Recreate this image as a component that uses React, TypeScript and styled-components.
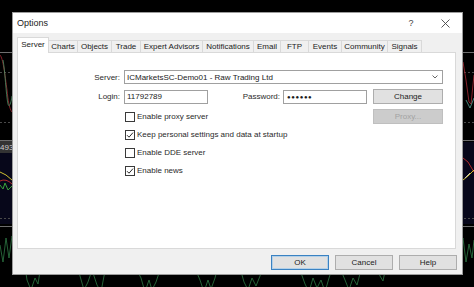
import React from 'react';
import styled, { createGlobalStyle } from 'styled-components';

const GlobalStyle = createGlobalStyle`
  html, body {
    margin: 0;
    padding: 0;
    background: #000;
  }
  body {
    font-family: 'Liberation Sans', Arial, sans-serif;
  }
`;

const Desktop = styled.div`
  position: relative;
  width: 474px;
  height: 287px;
  overflow: hidden;
  box-sizing: border-box;
  padding: 12px 0 0 12px;
  background: #000;
`;

const ChartLayer = styled.svg`
  position: absolute;
  left: 0;
  top: 0;
`;

const Window = styled.div`
  position: relative;
  width: 451px;
  height: 263px;
  box-sizing: border-box;
  border: 1px solid #9c9c9c;
  background: #f0f0f0;
  display: flex;
  flex-direction: column;
  font-size: 8px;
  color: #222;
`;

const TitleBar = styled.div`
  height: 20px;
  background: #fff;
  display: flex;
  align-items: center;
  padding-left: 4px;
`;

const Title = styled.span`
  flex: 1;
  font-size: 9px;
  color: #222;
`;

const TitleButton = styled.div`
  width: 34px;
  height: 20px;
  display: flex;
  align-items: center;
  justify-content: center;
  font-size: 9px;
  color: #444;
`;

const TabStrip = styled.div`
  position: relative;
  z-index: 1;
  height: 20px;
  margin-bottom: -1px;
  padding-left: 4px;
  display: flex;
  align-items: flex-end;
`;

const Tab = styled.div<{ $w: number; $active?: boolean }>`
  box-sizing: border-box;
  width: ${({ $w }) => $w}px;
  height: ${({ $active }) => ($active ? 16 : 12)}px;
  margin-bottom: ${({ $active }) => ($active ? 0 : 1)}px;
  padding-bottom: ${({ $active }) => ($active ? 2 : 0)}px;
  display: flex;
  align-items: center;
  justify-content: center;
  white-space: nowrap;
  background: ${({ $active }) => ($active ? '#fff' : '#f0f0f0')};
  border: 1px solid #d9d9d9;
  border-bottom: none;
  border-left: ${({ $active }) => ($active ? '1px solid #d9d9d9' : 'none')};
  color: #222;
`;

const TabPanel = styled.div`
  box-sizing: border-box;
  height: 197px;
  margin: 0 6px 0 4px;
  padding-top: 17px;
  background: #fff;
  border: 1px solid #d9d9d9;
`;

const Form = styled.div`
  display: grid;
  grid-template-columns: 106px 84px 75px 84px 6px 70px;
  grid-template-rows: 14px 15px auto;
  row-gap: 5px;
  align-items: center;
`;

const Label = styled.label<{ $pad?: number }>`
  text-align: right;
  padding-right: ${({ $pad }) => $pad ?? 4}px;
  color: #2a2a2a;
`;

const TextBox = styled.div<{ $span?: string }>`
  grid-column: ${({ $span }) => $span ?? 'auto'};
  box-sizing: border-box;
  height: 14px;
  padding-left: 2px;
  display: flex;
  align-items: center;
  background: #fff;
  border: 1px solid #a0a0a0;
  color: #1a1a1a;
`;

const ComboText = styled.span`
  flex: 1;
`;

const Chevron = styled.svg`
  margin-right: 4px;
`;

const Dots = styled.span`
  font-size: 6px;
  letter-spacing: 0.6px;
  padding-left: 1px;
`;

const Button = styled.div<{ $disabled?: boolean; $default?: boolean }>`
  box-sizing: border-box;
  width: 58px;
  height: 15px;
  display: flex;
  align-items: center;
  justify-content: center;
  background: ${({ $disabled }) => ($disabled ? '#cccccc' : '#e1e1e1')};
  border: 1px solid
    ${({ $disabled, $default }) =>
      $default ? '#3a82c2' : $disabled ? '#bfbfbf' : '#adadad'};
  box-shadow: ${({ $default }) => ($default ? 'inset 0 0 0 1px #b3d0e8' : 'none')};
  color: ${({ $disabled }) => ($disabled ? '#a3a3a3' : '#222')};
`;

const SideButton = styled(Button)`
  width: 70px;
  grid-column: 6;
  align-self: start;
`;

const CheckList = styled.div`
  grid-column: 2 / 5;
  grid-row: 3;
  display: flex;
  flex-direction: column;
  gap: 3px;
`;

const CheckRow = styled.div`
  height: 15px;
  display: flex;
  align-items: center;
  gap: 2px;
  padding-left: 1px;
  white-space: nowrap;
  color: #2a2a2a;
`;

const Box = styled.div`
  box-sizing: border-box;
  width: 10px;
  height: 10px;
  border: 1px solid #3a3a3a;
  background: #fff;
  display: flex;
  align-items: center;
  justify-content: center;
`;

const Footer = styled.div`
  flex: 1;
  display: flex;
  justify-content: flex-end;
  align-items: flex-start;
  gap: 6px;
  padding: 6px 5px 0 0;
`;

const tabs: [string, number][] = [
  ['Server', 32],
  ['Charts', 29],
  ['Objects', 34],
  ['Trade', 29],
  ['Expert Advisors', 62],
  ['Notifications', 51],
  ['Email', 27],
  ['FTP', 28],
  ['Events', 33],
  ['Community', 46],
  ['Signals', 34],
];

const checks: [string, boolean][] = [
  ['Enable proxy server', false],
  ['Keep personal settings and data at startup', true],
  ['Enable DDE server', false],
  ['Enable news', true],
];

const wave =
  '0,245 3,262 6,238 9,258 12,236 16,250 20,242 24,260 27,280 31,290 35,278 38,284 41,265 46,250 52,262 58,248 64,255 70,245 76,262 80,276 84,290 88,282 92,270 97,285 101,292 104,276 108,260 115,252 122,262 130,255 136,268 141,278 145,292 149,280 152,290 156,282 160,270 166,258 173,250 180,262 187,255 194,266 200,280 204,292 208,280 211,289 215,278 219,262 226,252 233,258 240,268 244,282 248,290 252,278 256,286 260,276 264,262 270,250 278,258 286,252 294,264 300,270 305,284 309,292 313,278 317,288 321,280 325,292 329,278 334,262 340,268 345,280 349,290 353,278 357,285 361,270 368,255 375,262 380,276 383,281 386,266 394,252 402,258 410,248 418,262 426,255 434,268 442,258 450,262 458,250 463,238 466,262 469,244 472,258 474,240';

const Chart = () => (
  <ChartLayer width={474} height={287} viewBox="0 0 474 287">
    <rect x={0} y={142} width={474} height={82} fill="#07071a" />
    {[52.5, 140.5, 226.5].map((y) => (
      <line key={y} x1={0} x2={474} y1={y} y2={y} stroke="#6e6e6e" strokeWidth={1} />
    ))}
    {[72.5, 122.5, 218.5].map((y) => (
      <line key={y} x1={0} x2={474} y1={y} y2={y} stroke="#4a4a4a" strokeDasharray="2 2" />
    ))}
    <path d="M0 55 C3 58 5 75 7 90 C8 100 9 108 12 112" stroke="#a82a34" fill="none" strokeWidth={0.8} />
    <path d="M3 60 C5 70 6 95 8 104 C9 108 11 104 12 96" stroke="#4a9064" fill="none" strokeWidth={0.8} />
    <path d="M463 62 L466 80 L469 102 L471 104 L474 75" stroke="#a82a34" fill="none" strokeWidth={0.8} />
    <path d="M466 100 L470 108 L474 98" stroke="#58a094" fill="none" strokeWidth={0.8} />
    <rect x={0} y={141} width={13} height={12} fill="#333" />
    <text x={0} y={150} fill="#cfcfcf" fontSize={8} fontFamily="Liberation Sans, Arial, sans-serif">
      493
    </text>
    <path d="M0 172 L6 175 L12 180" stroke="#d0c030" fill="none" />
    <path d="M0 181 Q6 178 12 184" stroke="#b02a2a" fill="none" />
    <path d="M0 185 L3 189 L5 183 L8 190 L12 186" stroke="#38a038" fill="none" />
    <path d="M463 158 L468 162 L474 172" stroke="#b02a2a" fill="none" />
    <path d="M463 180 L468 176 L474 170" stroke="#d0c030" fill="none" />
    <path d="M465 178 L470 173" stroke="#bdbdbd" fill="none" />
    <polyline points={wave} stroke="#2f7a45" fill="none" strokeWidth={0.8} />
  </ChartLayer>
);

const Check = () => (
  <svg width={8} height={8} viewBox="0 0 8 8">
    <polyline points="1,4.2 3,6.2 7,1.6" stroke="#2a2a2a" strokeWidth={1} fill="none" />
  </svg>
);

export default function App() {
  return (
    <>
      <GlobalStyle />
      <Desktop>
        <Chart />
        <Window>
          <TitleBar>
            <Title>Options</Title>
            <TitleButton>?</TitleButton>
            <TitleButton>
              <svg width={9} height={9} viewBox="0 0 9 9">
                <path d="M0.5 0.5 L8.5 8.5 M8.5 0.5 L0.5 8.5" stroke="#444" strokeWidth={0.9} />
              </svg>
            </TitleButton>
          </TitleBar>
          <TabStrip>
            {tabs.map(([name, w], i) => (
              <Tab key={name} $w={w} $active={i === 0}>
                {name}
              </Tab>
            ))}
          </TabStrip>
          <TabPanel>
            <Form>
              <Label>Server:</Label>
              <TextBox $span="2 / 7">
                <ComboText>ICMarketsSC-Demo01 - Raw Trading Ltd</ComboText>
                <Chevron width={6} height={4} viewBox="0 0 6 4">
                  <polyline points="0.5,0.5 3,3 5.5,0.5" stroke="#555" fill="none" strokeWidth={0.9} />
                </Chevron>
              </TextBox>
              <Label>Login:</Label>
              <TextBox>11792789</TextBox>
              <Label $pad={3}>Password:</Label>
              <TextBox>
                <Dots>●●●●●●</Dots>
              </TextBox>
              <span />
              <SideButton>Change</SideButton>
              <CheckList>
                {checks.map(([text, on]) => (
                  <CheckRow key={text}>
                    <Box>{on && <Check />}</Box>
                    {text}
                  </CheckRow>
                ))}
              </CheckList>
              <SideButton $disabled>Proxy...</SideButton>
            </Form>
          </TabPanel>
          <Footer>
            <Button $default>OK</Button>
            <Button>Cancel</Button>
            <Button>Help</Button>
          </Footer>
        </Window>
      </Desktop>
    </>
  );
}
